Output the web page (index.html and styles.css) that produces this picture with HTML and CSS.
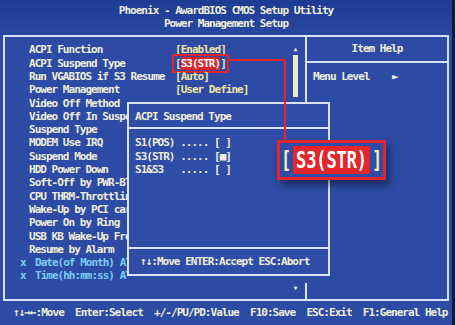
FILE: index.html
```html
<!DOCTYPE html>
<html lang="en">
<head>
  <meta charset="UTF-8"/>
  <title>Power Management Setup</title>
  <link rel="stylesheet" href="styles.css">
</head>
<body>

  <div class="screen">
    <header class="title">
      <div>Phoenix - AwardBIOS CMOS Setup Utility</div>
      <div>Power Management Setup</div>
    </header>

    <main class="frame">
      <section class="menu">
        <ul class="items">
          <li><span class="label">ACPI Function</span><span class="value">[Enabled]</span></li>
          <li><span class="label">ACPI Suspend Type</span><span class="value sel">[<span class="hl">S3(STR)</span>]</span></li>
          <li><span class="label">Run VGABIOS if S3 Resume</span><span class="value">[Auto]</span></li>
          <li><span class="label">Power Management</span><span class="value">[User Define]</span></li>
          <li><span class="label">Video Off Method</span></li>
          <li><span class="label">Video Off In Suspend</span></li>
          <li><span class="label">Suspend Type</span></li>
          <li><span class="label">MODEM Use IRQ</span></li>
          <li><span class="label">Suspend Mode</span></li>
          <li><span class="label">HDD Power Down</span></li>
          <li><span class="label">Soft-Off by PWR-BTTN</span></li>
          <li><span class="label">CPU THRM-Throttling</span></li>
          <li><span class="label">Wake-Up by PCI card</span></li>
          <li><span class="label">Power On by Ring</span></li>
          <li><span class="label">USB KB Wake-Up From S3</span></li>
          <li><span class="label">Resume by Alarm</span></li>
          <li class="dim"><span class="label"><span class="mark">x</span>Date(of Month) Alarm</span></li>
          <li class="dim"><span class="label"><span class="mark">x</span>Time(hh:mm:ss) Alarm</span></li>
        </ul>
        <div class="scroll">
          <span class="arrow">▲</span>
          <span class="thumb"></span>
          <span class="spacer"></span>
          <span class="arrow">▼</span>
        </div>
      </section>

      <aside class="help">
        <h2>Item Help</h2>
        <p>Menu Level    ►</p>
      </aside>

      <!-- ACPI suspend type picker -->
      <div class="popup">
        <div class="popup-title">ACPI Suspend Type</div>
        <ul class="options">
          <li>S1(POS) ..... [ ]</li>
          <li>S3(STR) ..... [■]</li>
          <li>S1&amp;S3   ..... [ ]</li>
        </ul>
        <div class="spacer"></div>
        <div class="popup-keys">↑↓:Move ENTER:Accept ESC:Abort</div>
      </div>

      <div class="connector"></div>
      <div class="callout">
        <span class="big">[<span class="big-hl">S3(STR)</span>]</span>
      </div>
    </main>

    <footer class="keys">↑↓→←:Move  Enter:Select  +/-/PU/PD:Value  F10:Save  ESC:Exit  F1:General Help</footer>
  </div>

</body>
</html>
```

FILE: styles.css
```css
* { box-sizing: border-box; margin: 0; padding: 0; }
html, body { height: 100%; }

body {
  background: #111a3a;
  font-family: "DejaVu Sans Mono", "Liberation Mono", monospace;
  font-weight: bold;
  font-size: 11px;
  letter-spacing: -0.98px;
  color: #efeedb;
  overflow: hidden;
}

.screen {
  width: 452px;
  height: 325px;
  background: #2d4ba5;
  display: flex;
  flex-direction: column;
}

.title {
  height: 35px;
  padding-top: 4px;
  text-align: center;
  line-height: 13px;
  background: linear-gradient(#1d3b93, #2948a2);
}

.frame {
  position: relative;
  height: 266px;
  margin: 0 3px;
  border: 2px solid #d9e1f5;
  display: flex;
}

.menu {
  flex: 1;
  display: flex;
  padding: 6.35px 5px 5px 24px;
}

.items {
  flex: 1;
  list-style: none;
}

.items li {
  display: flex;
  height: 13.3px;
  line-height: 13.3px;
  white-space: pre;
}

.label { width: 146px; flex-shrink: 0; }
.value { color: #f1e49c; }

.sel {
  outline: 2px solid #e3262b;
  outline-offset: 1px;
}

.hl {
  background: #d8262c;
  color: #fff;
}

.dim { color: #79cdf2; }
.dim .label { margin-left: -9px; width: 155px; }
.mark { display: inline-block; width: 15px; }

.scroll {
  width: 10px;
  display: flex;
  flex-direction: column;
  align-items: center;
}

.arrow {
  height: 12px;
  line-height: 12px;
  font-size: 6px;
}

.thumb {
  width: 5px;
  height: 42px;
  background: #ece9c6;
}

.spacer { flex: 1; }

.help {
  width: 142px;
  border-left: 2px solid #d9e1f5;
}

.help h2 {
  font-size: inherit;
  font-weight: inherit;
  height: 26px;
  line-height: 24px;
  text-align: center;
  border-bottom: 2px solid #d9e1f5;
}

.help p {
  padding: 7.35px 0 0 6px;
  line-height: 13.3px;
  white-space: pre;
}

/* the drop shadow is screen blue, like the BIOS popup shadow */
.popup {
  position: absolute;
  left: 122px;
  top: 65px;
  width: 203px;
  height: 174px;
  background: #2f4da7;
  border: 2px solid #dbe3f6;
  box-shadow: 0 7px 0 0 #2d4ba5;
  display: flex;
  flex-direction: column;
  z-index: 1;
}

.popup-title {
  padding: 6px 0 4px 6px;
  line-height: 13.3px;
  border-bottom: 2px solid #dbe3f6;
}

.options {
  list-style: none;
  padding: 7px 0 0 6px;
}

.options li {
  line-height: 13.3px;
  white-space: pre;
}

.popup-keys {
  border-top: 2px solid #dbe3f6;
  padding: 6.35px 0 5.35px 11px;
  line-height: 13.3px;
}

.connector {
  position: absolute;
  left: 225px;
  top: 22px;
  width: 56px;
  height: 81px;
  border-top: 2px solid #e3262b;
  border-right: 2px solid #e3262b;
  z-index: 2;
}

.callout {
  position: absolute;
  left: 272px;
  top: 103px;
  width: 109px;
  height: 40px;
  border: 3px solid #e3262b;
  background: #2f4da7;
  display: flex;
  align-items: center;
  justify-content: center;
  box-shadow: 3px 5px 8px rgba(0, 0, 0, 0.45);
  z-index: 3;
}

.big {
  display: inline-block;
  font-size: 17px;
  line-height: 20px;
  letter-spacing: -0.1px;
  color: #f6efb2;
  transform: scaleY(1.4);
}

.big-hl {
  display: inline-block;
  background: #e3262b;
  color: #fff;
  padding: 0 3px;
  margin: 0 2px;
}

.keys {
  flex: 1;
  line-height: 24px;
  padding-left: 13px;
  white-space: pre;
}
```
